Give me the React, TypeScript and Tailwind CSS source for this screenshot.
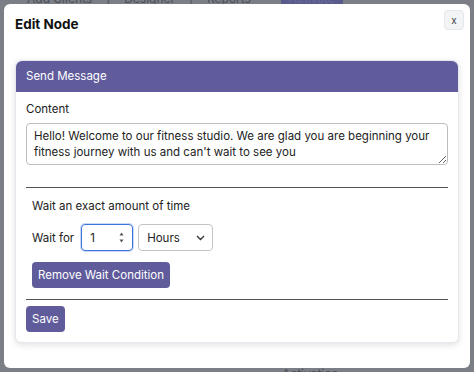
import { useState } from 'react'

const font = { fontFamily: 'Inter, "Noto Sans", sans-serif' }

function BackgroundPage() {
  return (
    <div className="flex h-full flex-col justify-between text-[12px] leading-[16px] text-[#4b4f57]">
      <div className="-mt-[9px] flex items-center pl-[27px]">
        <span>Add Clients</span>
        <span className="mx-[14px]">|</span>
        <span>Designer</span>
        <span className="mx-[14px]">|</span>
        <span>Reports</span>
        <span className="ml-[30px] w-[62px] rounded bg-[#5a5a8e] text-center text-[#6b6a9a]">Activate</span>
      </div>
      <div className="-mb-[10px] pl-[282px]">
        <span>Activation</span>
      </div>
    </div>
  )
}

function App() {
  const [content, setContent] = useState(
    "Hello! Welcome to our fitness studio. We are glad you are beginning your fitness journey with us and can't wait to see you"
  )
  const [amount, setAmount] = useState('1')
  const [unit, setUnit] = useState('Hours')

  return (
    <div className="relative h-[372px] w-[474px] overflow-hidden bg-[#7b7e85]" style={font}>
      <BackgroundPage />

      {/* modal */}
      <div className="absolute left-[4px] top-[4px] h-[364px] w-[466px] rounded-md bg-white">
        <div className="flex h-[40px] items-center justify-between pl-[11px] pr-[6px]">
          <h2 className="text-[13.5px] font-bold text-[#111]">Edit Node</h2>
          <button className="-mt-[8px] flex h-[20px] w-[20px] items-center justify-center rounded border border-[#e5e7eb] bg-[#f3f4f6] text-[10px] text-[#444]">
            x
          </button>
        </div>

        <div className="mx-[11px] mt-[16px] rounded-md border border-[#e6e6ee] bg-white shadow-[0_2px_6px_rgba(0,0,0,0.12)]">
          <div className="flex h-[31px] items-center rounded-t-md bg-[#605c9c] px-[10px] text-[11.5px] text-white">
            Send Message
          </div>

          <div className="px-[10px] pb-[10px] pt-[9px] text-[11.5px] leading-[16px] text-[#222]">
            <label className="block">Content</label>
            <textarea
              value={content}
              onChange={(e) => setContent(e.target.value)}
              className="mt-[6px] block h-[42px] w-full resize-y rounded border border-[#bdbdbd] px-[7px] py-[4px] text-[11.5px] leading-[16px] text-[#222] outline-none"
            />

            <hr className="mt-[22px] border-t-[1.5px] border-[#555]" />

            <div className="px-[6px] pt-[10px]">
              <p>Wait an exact amount of time</p>
              <div className="mt-[10px] flex items-center gap-[5px]">
                <span className="mr-[2px]">Wait for</span>
                <div className="relative">
                  <input
                    type="text"
                    value={amount}
                    onChange={(e) => setAmount(e.target.value)}
                    className="h-[27px] w-[52px] rounded border border-[#3b73d9] px-[8px] text-[11.5px] text-[#222] outline-none ring-1 ring-[#c8d8f5]"
                  />
                  <svg
                    className="pointer-events-none absolute right-[9px] top-[8px]"
                    width="5"
                    height="11"
                    viewBox="0 0 5 11"
                    fill="#555"
                  >
                    <path d="M2.5 0.5L4.5 3.5H0.5Z" />
                    <path d="M2.5 10.5L4.5 7.5H0.5Z" />
                  </svg>
                </div>
                <div className="relative">
                  <select
                    value={unit}
                    onChange={(e) => setUnit(e.target.value)}
                    className="h-[27px] w-[75px] appearance-none rounded border border-[#c4c4c4] bg-white pl-[8px] text-[11.5px] text-[#222] outline-none"
                  >
                    <option>Minutes</option>
                    <option>Hours</option>
                    <option>Days</option>
                  </select>
                  <svg
                    className="pointer-events-none absolute right-[8px] top-[11px]"
                    width="9"
                    height="6"
                    viewBox="0 0 9 6"
                    fill="none"
                    stroke="#333"
                    strokeWidth="1.3"
                  >
                    <path d="M1 1l3.5 3.5L8 1" />
                  </svg>
                </div>
              </div>
              <button className="mt-[11px] h-[26px] rounded bg-[#605c9c] px-[6px] text-white">
                Remove Wait Condition
              </button>
            </div>

            <hr className="mt-[11px] border-t-[1.5px] border-[#555]" />

            <button className="mt-[6px] h-[26px] rounded bg-[#605c9c] px-[6px] text-white">Save</button>
          </div>
        </div>
      </div>
    </div>
  )
}

export default App
